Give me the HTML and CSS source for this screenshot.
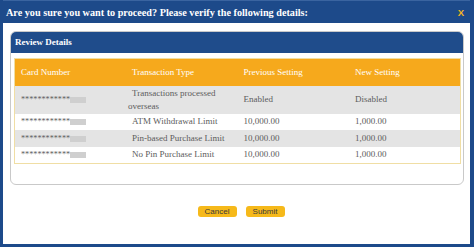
FILE: index.html
```html
<!DOCTYPE html>
<html lang="en">
<head>
    <meta charset="UTF-8">
    <meta name="viewport" content="width=device-width, initial-scale=1.0">
    <title>Confirm Changes</title>
    <link rel="stylesheet" href="styles.css">
</head>
<body>
    <div class="dialog">
        <div class="dialog-title">
            <span class="title-text">Are you sure you want to proceed? Please verify the following details:</span>
            <span class="close-button">X</span>
        </div>

        <div class="dialog-body">
            <div class="panel">
                <div class="panel-header">Review Details</div>
                <table class="review-table">
                    <thead>
                        <tr>
                            <th>Card Number</th>
                            <th class="type-col">Transaction Type</th>
                            <th>Previous Setting</th>
                            <th>New Setting</th>
                        </tr>
                    </thead>
                    <tbody>
                        <tr class="row-tall">
                            <td class="card-col">************<span class="masked"></span></td>
                            <td class="type-col">Transactions processed overseas</td>
                            <td>Enabled</td>
                            <td>Disabled</td>
                        </tr>
                        <tr>
                            <td class="card-col">************<span class="masked"></span></td>
                            <td class="type-col">ATM Withdrawal Limit</td>
                            <td>10,000.00</td>
                            <td>1,000.00</td>
                        </tr>
                        <tr>
                            <td class="card-col">************<span class="masked"></span></td>
                            <td class="type-col">Pin-based Purchase Limit</td>
                            <td>10,000.00</td>
                            <td>1,000.00</td>
                        </tr>
                        <tr>
                            <td class="card-col">************<span class="masked"></span></td>
                            <td class="type-col">No Pin Purchase Limit</td>
                            <td>10,000.00</td>
                            <td>1,000.00</td>
                        </tr>
                    </tbody>
                </table>
            </div>

            <div class="dialog-buttons">
                <div class="dialog-button">Cancel</div>
                <div class="dialog-button">Submit</div>
            </div>
        </div>
    </div>
</body>
</html>
```

FILE: styles.css
```css
* {
    margin: 0;
    padding: 0;
    box-sizing: border-box;
}

html, body {
    height: 100%;
}

body {
    background-color: #1d4a8a;
    font-family: 'Liberation Serif', 'Times New Roman', serif;
    overflow: hidden;
}

.dialog {
    height: 247px;
    padding: 0 4px 3px 3px;
    display: flex;
    flex-direction: column;
}

.dialog-title {
    height: 23px;
    display: flex;
    justify-content: space-between;
    align-items: center;
    padding: 0 6px 0 3px;
    border-top: 1px solid #3a64a0;
}

.title-text {
    font-size: 10.2px;
    font-weight: bold;
    color: #fff;
}

.close-button {
    font-family: 'Liberation Sans', Arial, sans-serif;
    font-size: 9.5px;
    font-weight: bold;
    color: #f5b71d;
}

.dialog-body {
    flex: 1;
    background-color: #fff;
    padding: 8px 6px 0 7px;
}

.panel {
    height: 154px;
    border: 1px solid #c9c9c9;
    border-radius: 6px;
    overflow: hidden;
}

.panel-header {
    height: 21px;
    background-color: #1f4c8b;
    color: #fff;
    font-size: 9px;
    font-weight: bold;
    padding-left: 4px;
    line-height: 21px;
}

.review-table {
    width: 447px;
    margin: 5px 0 0 3px;
    border-collapse: collapse;
    border: 1px solid #f0dea4;
    table-layout: fixed;
    font-size: 9px;
    color: #5c5c5c;
}

.review-table th {
    height: 27px;
    background-color: #f6a91c;
    color: #fff;
    font-weight: normal;
    text-align: left;
    padding-left: 6px;
}

.review-table td {
    height: 16.5px;
    padding-left: 6px;
    line-height: 13px;
}

.review-table tbody tr:nth-child(odd) {
    background-color: #e4e4e4;
}

.review-table .row-tall td {
    height: 28px;
}

.review-table td.card-col {
    font-size: 8.2px;
}

.review-table td.type-col {
    padding-left: 2px;
    text-indent: 4px;
}

.masked {
    display: inline-block;
    width: 16px;
    height: 6px;
    background-color: #cfcfcf;
    filter: blur(0.6px);
    vertical-align: middle;
}

.dialog-buttons {
    display: flex;
    justify-content: center;
    gap: 9px;
    margin-top: 21px;
    padding-left: 8px;
}

.dialog-button {
    width: 39px;
    height: 11px;
    border-radius: 3px;
    background-color: #f6b91a;
    color: #3a3a3a;
    font-family: 'Liberation Sans', Arial, sans-serif;
    font-size: 8px;
    line-height: 11px;
    text-align: center;
}
```
